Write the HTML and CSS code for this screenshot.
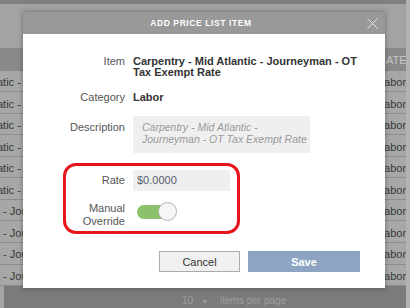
FILE: index.html
```html
<!DOCTYPE html>
<html lang="en">
<head>
    <meta charset="UTF-8">
    <title>Add Price List Item</title>
    <link rel="stylesheet" href="styles.css">
</head>
<body>
<div class="page">
    <div class="main">
        <div class="topbar"></div>
        <div class="toolbar"></div>
        <div class="thead">
            <span class="c1"></span><span class="c2">CATEGORY</span>
        </div>
        <div class="row"><span class="c1">atic - Jo</span><span class="c2">Labor</span></div>
        <div class="row"><span class="c1">atic - Jo</span><span class="c2">Labor</span></div>
        <div class="row"><span class="c1">atic - Jo</span><span class="c2">Labor</span></div>
        <div class="row"><span class="c1">atic - Jo</span><span class="c2">Labor</span></div>
        <div class="row"><span class="c1">atic - Jo</span><span class="c2">Labor</span></div>
        <div class="row"><span class="c1">atic - Jo</span><span class="c2">Labor</span></div>
        <div class="row"><span class="c1">t - Journ</span><span class="c2">Labor</span></div>
        <div class="row"><span class="c1">t - Journ</span><span class="c2">Labor</span></div>
        <div class="row"><span class="c1">t - Journ</span><span class="c2">Labor</span></div>
        <div class="row"><span class="c1">t - Journ</span><span class="c2">Labor</span></div>
        <div class="pager">
            <span>10</span><span class="caret">&#9660;</span><span>items per page</span>
        </div>
    </div>
    <div class="scrollbar"></div>
</div>

<div class="modal">
    <div class="modal-head">
        <span class="modal-title">ADD PRICE LIST ITEM</span>
        <span class="close">
            <svg width="11" height="11" viewBox="0 0 11 11">
                <path d="M0.5 0.5 L10.5 10.5 M10.5 0.5 L0.5 10.5" stroke="#e2e2e2" stroke-width="1" fill="none"/>
            </svg>
        </span>
    </div>
    <div class="modal-body">
        <div class="field">
            <span class="label">Item</span>
            <span class="value">Carpentry - Mid Atlantic - Journeyman - OT Tax Exempt Rate</span>
        </div>
        <div class="field field-category">
            <span class="label">Category</span>
            <span class="value">Labor</span>
        </div>
        <div class="field field-desc">
            <span class="label label-desc">Description</span>
            <div class="textarea">Carpentry - Mid Atlantic -<br>Journeyman - OT Tax Exempt Rate</div>
        </div>
        <div class="field field-rate">
            <span class="label label-rate">Rate</span>
            <div class="input">$0.0000</div>
        </div>
        <div class="field field-override">
            <span class="label label-override">Manual<br>Override</span>
            <div class="toggle">
                <span class="track"></span>
                <span class="knob"></span>
            </div>
        </div>
        <div class="actions">
            <button class="btn btn-cancel">Cancel</button>
            <button class="btn btn-save">Save</button>
        </div>
    </div>
</div>

<div class="callout"></div>
</body>
</html>
```

FILE: styles.css
```css
* {
    box-sizing: border-box;
}

body {
    margin: 0;
    width: 410px;
    height: 308px;
    overflow: hidden;
    font-family: "Liberation Sans", Arial, sans-serif;
    background-color: #a6a6a6;
}

.page {
    display: flex;
    height: 308px;
}

.main {
    flex: 1;
    display: flex;
    flex-direction: column;
    overflow: hidden;
}

.scrollbar {
    width: 4px;
    background-color: #b3b3b3;
}

.topbar {
    height: 4px;
    background-color: #7f7f7f;
}

.toolbar {
    height: 44px;
    background-color: #a3a3a3;
}

.thead {
    height: 23px;
    display: flex;
    align-items: center;
    background-color: #8a8a8a;
    color: #c6c6c6;
    font-size: 11px;
    padding-top: 2px;
}

.row {
    height: 21.6px;
    display: flex;
    align-items: center;
    border-bottom: 1px solid #8c8c8c;
    color: #383838;
    font-size: 11px;
    padding-top: 2px;
    background-color: #a7a7a7;
}

.c1 {
    flex: 1;
    margin-left: -3px;
    white-space: nowrap;
    overflow: hidden;
}

.c2 {
    width: 28px;
    white-space: nowrap;
    overflow: hidden;
}

.pager {
    flex: 1;
    margin-left: 4px;
    background-color: #7b7b7b;
    color: #9d9d9d;
    font-size: 10px;
    padding: 9px 0 0 178px;
    display: flex;
    gap: 8px;
}

.caret {
    font-size: 7px;
    line-height: 13px;
    margin-right: 4px;
}

.modal {
    position: absolute;
    left: 23px;
    top: 12px;
    width: 362px;
    height: 276px;
    background-color: #ffffff;
    box-shadow: 0 0 5px rgba(0, 0, 0, 0.35);
}

.modal-head {
    position: relative;
    height: 22px;
    background-color: #999999;
    display: flex;
    align-items: center;
    justify-content: center;
}

.modal-title {
    color: #ffffff;
    font-weight: bold;
    font-size: 8.5px;
    letter-spacing: 0.6px;
    margin-left: -6px;
}

.close {
    position: absolute;
    right: 7px;
    top: 6px;
    width: 11px;
    height: 11px;
    display: flex;
}

.modal-body {
    padding: 22px 25px 0 0;
    display: flex;
    flex-direction: column;
}

.field {
    display: grid;
    grid-template-columns: 102px 1fr;
    column-gap: 8px;
    align-items: start;
}

.label {
    text-align: right;
    color: #555555;
    font-size: 11px;
    line-height: 11px;
}

.value {
    color: #333333;
    font-weight: bold;
    font-size: 11px;
    line-height: 11px;
    max-width: 225px;
}

.field-category {
    margin-top: 14px;
}

.field-desc {
    margin-top: 13px;
}

.label-desc {
    margin-top: 5px;
    line-height: 12px;
}

.textarea {
    width: 177px;
    height: 37px;
    background-color: #efefef;
    color: #9a9a9a;
    font-style: italic;
    font-size: 10.5px;
    line-height: 12px;
    padding: 5px 0 0 9px;
    white-space: nowrap;
    overflow: hidden;
}

.field-rate {
    margin-top: 17px;
}

.label-rate {
    line-height: 21px;
}

.input {
    width: 97px;
    height: 21px;
    background-color: #efefef;
    color: #55606e;
    font-size: 11px;
    line-height: 21px;
    padding-left: 4px;
}

.field-override {
    margin-top: 11px;
}

.label-override {
    line-height: 13px;
}

.toggle {
    position: relative;
    width: 42px;
    height: 19px;
    margin-left: 4px;
}

.track {
    position: absolute;
    left: 0;
    top: 2.5px;
    width: 34px;
    height: 14px;
    border-radius: 7px;
    background-color: #8bc16a;
}

.knob {
    position: absolute;
    left: 21px;
    top: 0;
    width: 19px;
    height: 19px;
    border-radius: 50%;
    background-color: #f6f6f6;
    border: 1px solid #b5b5b5;
}

.actions {
    margin-top: 23px;
    display: flex;
    justify-content: flex-end;
    gap: 8px;
}

.btn {
    height: 21px;
    font-family: "Liberation Sans", Arial, sans-serif;
    font-size: 11px;
    padding: 0;
    outline: none;
}

.btn-cancel {
    width: 81px;
    background-color: #f0f0f0;
    border: 1px solid #ababab;
    color: #333333;
}

.btn-save {
    width: 112px;
    background-color: #8da5c2;
    border: none;
    color: #ffffff;
    font-weight: bold;
}

.callout {
    position: absolute;
    left: 63px;
    top: 163px;
    width: 177px;
    height: 71px;
    border: 3px solid #e8141c;
    border-radius: 13px;
}
```
